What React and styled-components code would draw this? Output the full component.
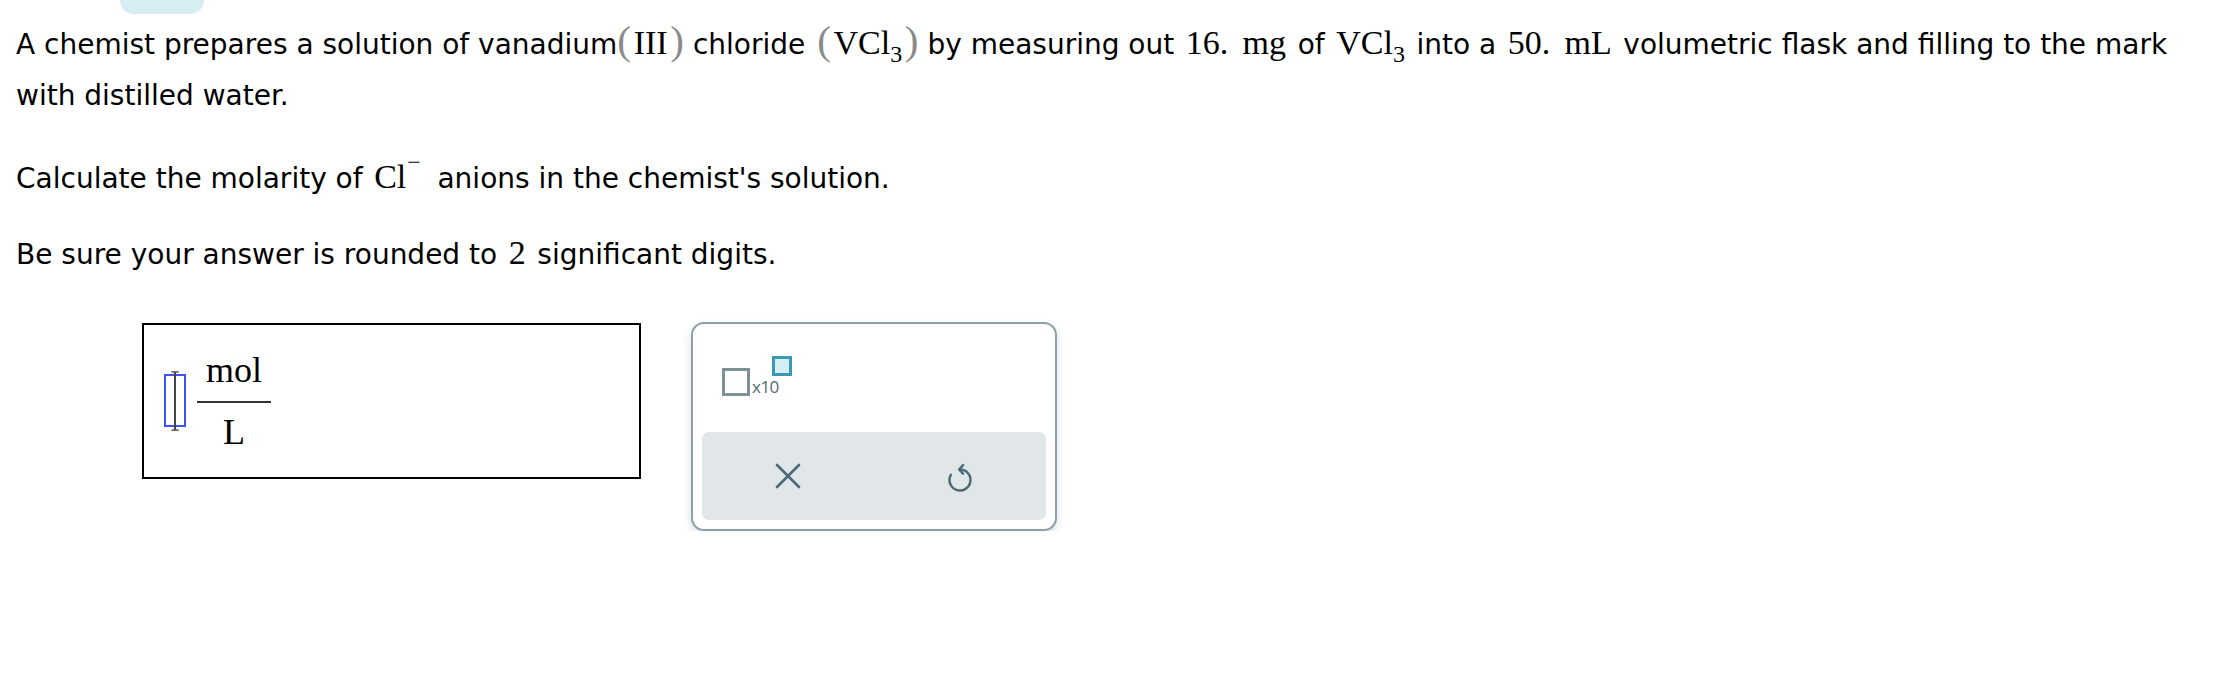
import React from 'react';
import styled, { createGlobalStyle } from 'styled-components';

const GlobalStyle = createGlobalStyle`
  html, body {
    margin: 0;
    padding: 0;
    background: #ffffff;
  }
  body {
    font-family: "DejaVu Sans", Verdana, sans-serif;
    color: #000000;
  }
`;

function Cursor() {
  return (
    <CursorSvg width="25" height="62" viewBox="0 0 25 62">
      <rect x="3" y="5" width="20" height="51" fill="none" stroke="#3b55f2" strokeWidth="2" />
      <line x1="13" y1="1.5" x2="13" y2="60.5" stroke="#444" strokeWidth="2" />
      <path d="M9.5 1.5 Q13 3 16.5 1.5" fill="none" stroke="#555" strokeWidth="1.6" />
      <path d="M9.5 60.5 Q13 59 16.5 60.5" fill="none" stroke="#555" strokeWidth="1.6" />
    </CursorSvg>
  );
}

function CloseIcon() {
  return (
    <svg width="26" height="26" viewBox="0 0 26 26">
      <path d="M2 2 L24 24 M24 2 L2 24" stroke="#4b6b78" strokeWidth="2.6" strokeLinecap="round" fill="none" />
    </svg>
  );
}

function ResetIcon() {
  return (
    <svg width="28" height="33" viewBox="0 0 24 28">
      <path d="M12 8 A9 9 0 1 1 4.21 12.5" stroke="#4b6b78" strokeWidth="2.1" strokeLinecap="round" fill="none" />
      <path d="M14.6 4.2 L11.2 8 L14.6 11.6" stroke="#4b6b78" strokeWidth="2.1" strokeLinecap="round" strokeLinejoin="round" fill="none" />
    </svg>
  );
}

function App() {
  return (
    <>
      <GlobalStyle />
      <TopStrip>
        <TabEdge />
      </TopStrip>
      <Page>
        <Para>
          A chemist prepares a solution of vanadium<Paren>(</Paren><M>III</M><Paren>)</Paren> chloride{' '}
          <Paren $outer>(</Paren><M>VCl<Sub>3</Sub></M><Paren>)</Paren> by measuring out <M>16.</M> <M>mg</M> of{' '}
          <M>VCl<Sub>3</Sub></M> into a <M>50.</M> <M>mL</M> volumetric flask and filling to the mark with
          distilled water.
        </Para>
        <Para $gap={32}>
          Calculate the molarity of <M>Cl<Sup>−</Sup></M> anions in the chemist's solution.
        </Para>
        <Para $gap={25}>
          Be sure your answer is rounded to <M>2</M> significant digits.
        </Para>

        <AnswerRow>
          <AnswerBox>
            <Cursor />
            <Fraction>
              <Numer>mol</Numer>
              <FracBar />
              <Denom>L</Denom>
            </Fraction>
          </AnswerBox>

          <ToolPanel>
            <ToolTop>
              <SciButton>
                <BaseSquare />
                <SciText>x10</SciText>
                <ExpSquare />
              </SciButton>
            </ToolTop>
            <ButtonBar>
              <ActionButton aria-label="clear">
                <CloseIcon />
              </ActionButton>
              <ActionButton aria-label="reset">
                <ResetIcon />
              </ActionButton>
            </ButtonBar>
          </ToolPanel>
        </AnswerRow>
      </Page>
    </>
  );
}

const TopStrip = styled.div`
  height: 14px;
  display: flex;
`;

const TabEdge = styled.div`
  width: 84px;
  height: 14px;
  margin-left: 120px;
  background: #d5edf3;
  border-radius: 0 0 14px 14px;
`;

const Page = styled.div`
  padding: 5px 16px 0 16px;
`;

const Para = styled.p`
  margin: ${(p) => p.$gap || 0}px 0 0 0;
  max-width: 2200px;
  font-size: 28px;
  line-height: 51px;
`;

const M = styled.span`
  font-family: "Liberation Serif", "Times New Roman", serif;
  font-size: 34px;
  line-height: 1;
  margin: 0 2.7px;
`;

const Paren = styled.span`
  font-family: "Liberation Serif", "Times New Roman", serif;
  font-size: 41px;
  line-height: 1;
  color: #8a8a8a;
  margin-left: ${(p) => (p.$outer ? 3 : 0)}px;
`;

const Sub = styled.span`
  font-size: 24px;
  line-height: 0;
  vertical-align: -8px;
`;

const Sup = styled.span`
  font-size: 24px;
  line-height: 0;
  vertical-align: 18px;
  margin-left: 1px;
  margin-right: 5px;
`;

const AnswerRow = styled.div`
  display: flex;
  align-items: flex-start;
  gap: 50px;
  margin: 43px 0 0 126px;
`;

const AnswerBox = styled.div`
  box-sizing: border-box;
  width: 499px;
  height: 156px;
  border: 2px solid #000;
  display: flex;
  align-items: center;
  padding-left: 18px;
  gap: 10px;
`;

const CursorSvg = styled.svg`
  display: block;
  flex: none;
`;

const Fraction = styled.div`
  display: flex;
  flex-direction: column;
  align-items: center;
  font-family: "Liberation Serif", "Times New Roman", serif;
  font-size: 36px;
  line-height: 36px;
`;

const Numer = styled.div`
  padding-bottom: 13px;
`;

const FracBar = styled.div`
  width: 74px;
  height: 2px;
  background: #333;
`;

const Denom = styled.div`
  padding-top: 11px;
`;

const ToolPanel = styled.div`
  box-sizing: border-box;
  width: 366px;
  height: 209px;
  margin-top: -1px;
  border: 2px solid #8ca0a8;
  border-radius: 13px;
  background: #fff;
  box-shadow: 0 4px 10px rgba(60, 80, 90, 0.18);
  display: flex;
  flex-direction: column;
`;

const ToolTop = styled.div`
  flex: 1;
  padding: 32px 0 0 29px;
`;

const SciButton = styled.div`
  display: flex;
  align-items: flex-start;
  width: 70px;
`;

const BaseSquare = styled.div`
  box-sizing: border-box;
  width: 28px;
  height: 28px;
  margin-top: 12px;
  border: 3px solid #7d9199;
  flex: none;
`;

const SciText = styled.span`
  margin: 22px 0 0 2px;
  font-family: "Open Sans", "Liberation Sans", sans-serif;
  font-size: 17px;
  line-height: 17px;
  letter-spacing: -0.5px;
  color: #4f6a76;
`;

const ExpSquare = styled.div`
  box-sizing: border-box;
  width: 20px;
  height: 20px;
  margin-left: -7px;
  border: 3px solid #3d98b1;
  background: #d4eef4;
  flex: none;
`;

const ButtonBar = styled.div`
  height: 88px;
  margin: 0 9px 9px 9px;
  border-radius: 7px;
  background: #e1e6e9;
  display: flex;
`;

const ActionButton = styled.button`
  flex: 1;
  display: flex;
  align-items: center;
  justify-content: center;
  background: transparent;
  border: none;
  padding: 0;
  cursor: pointer;
`;

export default App;
